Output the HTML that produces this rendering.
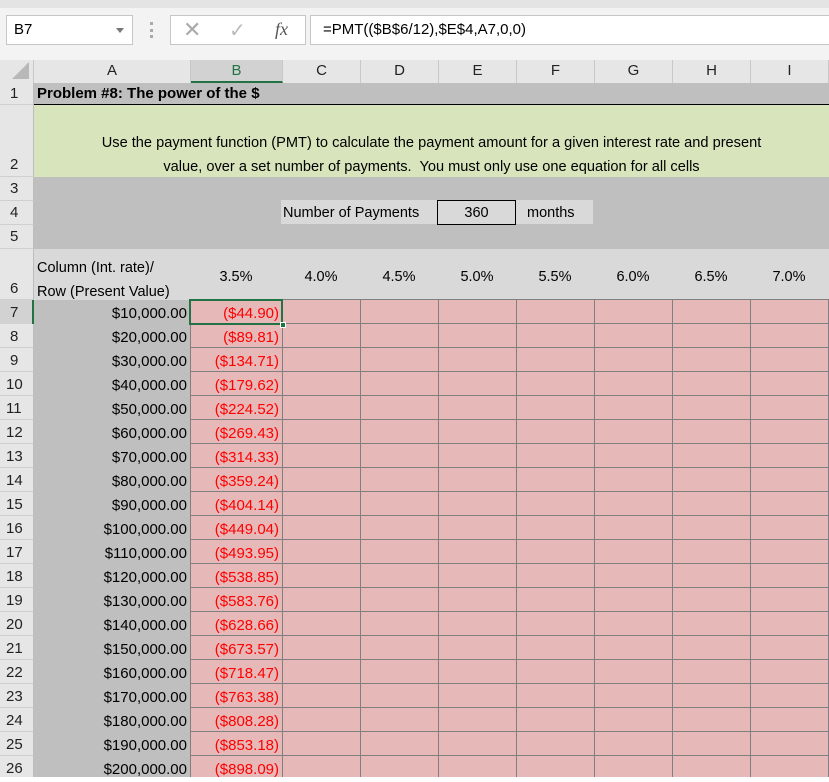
<!DOCTYPE html>
<html><head><meta charset="utf-8"><style>
*{margin:0;padding:0;box-sizing:border-box}
body{width:829px;height:777px;overflow:hidden;background:#fff;font-family:"Liberation Sans",Calibri,sans-serif;font-size:14.5px;color:#000;position:relative}
.a{position:absolute}
.top{left:0;top:0;width:829px;height:60px;background:#f3f3f3}
.box{background:#fff;border:1px solid #c6c6c6}
.ch{top:60px;height:23px;background:#e6e6e6;border-right:1px solid #c8c8c8;text-align:center;line-height:22px;font-size:15px;color:#222}
.rh{left:0;width:34px;background:#e6e6e6;border-bottom:1px solid #cfcfcf;border-right:1px solid #bdbdbd;padding-left:10px;color:#222;font-size:15px}
.hd{position:absolute;top:249px;height:51px;line-height:24px;text-align:center;padding-top:16px}
</style></head><body>
<div class="a top"></div>
<div class="a" style="left:0;top:0;width:829px;height:8px;background:#e4e4e4"></div>
<div class="a box" style="left:6px;top:15px;width:127px;height:30px;padding:5px 7px;font-size:15px">B7<span style="position:absolute;right:8px;top:12px;border:4px solid transparent;border-top:5px solid #777"></span></div>
<div class="a" style="left:150px;top:22px;width:3px;height:16px;border-left:3px dotted #aaa"></div>
<div class="a box" style="left:170px;top:15px;width:136px;height:30px;color:#aaa">
<span class="a" style="left:12px;top:1px;font-size:22px">✕</span>
<span class="a" style="left:58px;top:2px;font-size:20px;color:#bbb">✓</span>
<span class="a" style="left:104px;top:3px;font-size:18px;font-style:italic;font-family:'Liberation Serif',serif;color:#555">fx</span></div>
<div class="a box" style="left:310px;top:15px;width:525px;height:30px;padding:5px 12px;font-size:15px">=PMT(($B$6/12),$E$4,A7,0,0)</div>
<div class="a" style="left:0;top:60px;width:34px;height:23px;background:#e6e6e6;border-right:1px solid #c8c8c8"><div style="position:absolute;right:4px;bottom:4px;width:0;height:0;border-left:17px solid transparent;border-bottom:17px solid #b8b8b8"></div></div>
<div class="a ch" style="left:34px;width:157px">A</div>
<div class="a ch" style="left:191px;width:92px;background:#d2d2d2;border-bottom:2px solid #217346;color:#217346">B</div>
<div class="a ch" style="left:283px;width:78px">C</div>
<div class="a ch" style="left:361px;width:78px">D</div>
<div class="a ch" style="left:439px;width:78px">E</div>
<div class="a ch" style="left:517px;width:78px">F</div>
<div class="a ch" style="left:595px;width:78px">G</div>
<div class="a ch" style="left:673px;width:78px">H</div>
<div class="a ch" style="left:751px;width:78px">I</div>
<div class="a rh" style="top:83px;height:22px;line-height:21px">1</div>
<div class="a rh" style="top:105px;height:72px;line-height:120px">2</div>
<div class="a rh" style="top:177px;height:24px;line-height:24px">3</div>
<div class="a rh" style="top:201px;height:24px;line-height:24px">4</div>
<div class="a rh" style="top:225px;height:24px;line-height:24px">5</div>
<div class="a rh" style="top:249px;height:51px;line-height:80px">6</div>
<div class="a" style="left:34px;top:83px;width:795px;height:22px;background:#bfbfbf;border-bottom:1px solid #000;font-weight:bold;font-size:15px;padding-left:3px;line-height:21px">Problem #8: The power of the $</div>
<div class="a" style="left:34px;top:105px;width:795px;height:72px;background:#d8e4bc;text-align:center;padding-top:27px;line-height:23.5px;font-size:14.6px">Use the payment function (PMT) to calculate the payment amount for a given interest rate and present<br>value, over a set number of payments.&nbsp; You must only use one equation for all cells</div>
<div class="a" style="left:34px;top:177px;width:795px;height:72px;background:#bfbfbf"></div>
<div class="a" style="left:281px;top:200px;width:312px;height:24px;background:#d9d9d9;line-height:26px;font-size:14.5px"><span style="padding-left:2px">Number of Payments</span><span style="position:absolute;left:156px;top:0;width:79px;height:25px;border:1px solid #000;text-align:center;line-height:24px">360</span><span style="position:absolute;left:246px">months</span></div>
<div class="a" style="left:34px;top:249px;width:795px;height:51px;background:#d9d9d9"></div>
<div class="a" style="left:37px;top:256px;line-height:24px;font-size:14.5px">Column (Int. rate)/<br>Row (Present Value)</div>
<div class="a hd" style="left:190px;width:92px">3.5%</div>
<div class="a hd" style="left:282px;width:78px">4.0%</div>
<div class="a hd" style="left:360px;width:78px">4.5%</div>
<div class="a hd" style="left:438px;width:78px">5.0%</div>
<div class="a hd" style="left:516px;width:78px">5.5%</div>
<div class="a hd" style="left:594px;width:78px">6.0%</div>
<div class="a hd" style="left:672px;width:78px">6.5%</div>
<div class="a hd" style="left:750px;width:78px">7.0%</div>
<div class="a" style="left:34px;top:300px;width:156px;height:477px;background:#bfbfbf"></div>
<div class="a" style="left:190px;top:299px;width:639px;height:478px;background-color:#e6b8b7;background-image:linear-gradient(#808080 1px,transparent 1px);background-size:100% 24px"></div>
<div class="a" style="left:190px;top:299px;width:1px;height:478px;background:#808080"></div>
<div class="a" style="left:282px;top:299px;width:1px;height:478px;background:#808080"></div>
<div class="a" style="left:360px;top:299px;width:1px;height:478px;background:#808080"></div>
<div class="a" style="left:438px;top:299px;width:1px;height:478px;background:#808080"></div>
<div class="a" style="left:516px;top:299px;width:1px;height:478px;background:#808080"></div>
<div class="a" style="left:594px;top:299px;width:1px;height:478px;background:#808080"></div>
<div class="a" style="left:672px;top:299px;width:1px;height:478px;background:#808080"></div>
<div class="a" style="left:750px;top:299px;width:1px;height:478px;background:#808080"></div>
<div class="a" style="left:828px;top:299px;width:1px;height:478px;background:#808080"></div>
<div class="a" style="left:0;top:300px;width:34px;height:477px;background:#e6e6e6;border-right:1px solid #bdbdbd;background-image:linear-gradient(transparent 23px,#cfcfcf 23px);background-size:100% 24px"></div>
<div class="a" style="left:0;top:300px;width:34px;height:24px;background:#d2d2d2;border-right:2px solid #217346"></div>
<div class="a" style="left:0;top:301px;width:34px;font-size:15px;line-height:24px;padding-left:10px;color:#222">7<br>8<br>9</div>
<div class="a" style="left:0;top:373px;width:34px;font-size:15px;line-height:24px;padding-left:6px;color:#222">10<br>11<br>12<br>13<br>14<br>15<br>16<br>17<br>18<br>19<br>20<br>21<br>22<br>23<br>24<br>25<br>26</div>
<div class="a" style="left:34px;top:302px;width:153px;text-align:right;line-height:24px;font-size:15px">$10,000.00<br>$20,000.00<br>$30,000.00<br>$40,000.00<br>$50,000.00<br>$60,000.00<br>$70,000.00<br>$80,000.00<br>$90,000.00<br>$100,000.00<br>$110,000.00<br>$120,000.00<br>$130,000.00<br>$140,000.00<br>$150,000.00<br>$160,000.00<br>$170,000.00<br>$180,000.00<br>$190,000.00<br>$200,000.00</div>
<div class="a" style="left:190px;top:302px;width:89px;text-align:right;line-height:24px;font-size:15px;color:#ff0000">($44.90)<br>($89.81)<br>($134.71)<br>($179.62)<br>($224.52)<br>($269.43)<br>($314.33)<br>($359.24)<br>($404.14)<br>($449.04)<br>($493.95)<br>($538.85)<br>($583.76)<br>($628.66)<br>($673.57)<br>($718.47)<br>($763.38)<br>($808.28)<br>($853.18)<br>($898.09)</div>
<div class="a" style="left:189px;top:299px;width:94px;height:26px;border:2px solid #217346"></div>
<div class="a" style="left:280px;top:322px;width:6px;height:6px;background:#217346;border:1px solid #fff"></div>
</body></html>
